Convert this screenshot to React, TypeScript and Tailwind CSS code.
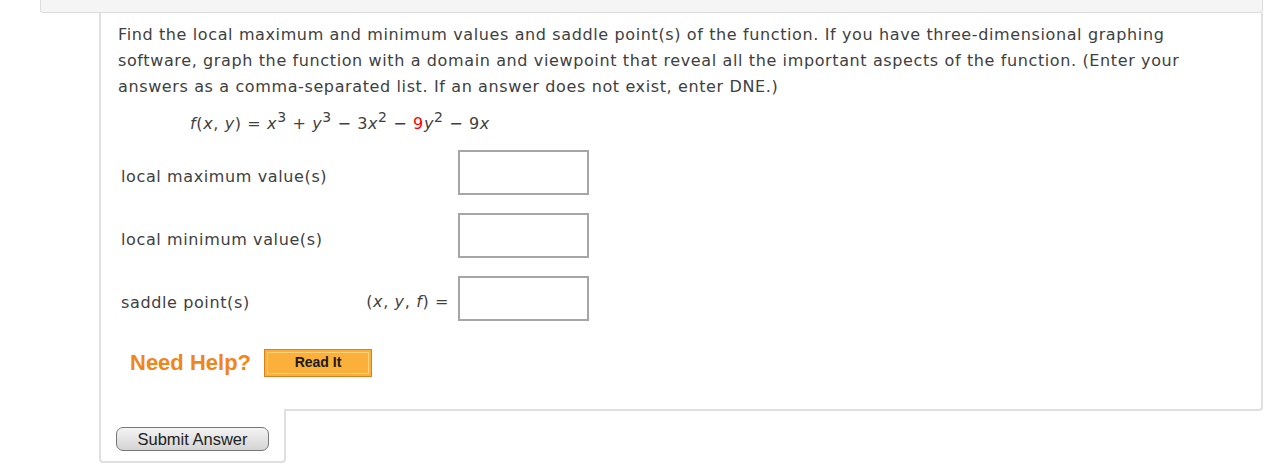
import React from 'react'

const verdana = { fontFamily: '"DejaVu Sans", Verdana, sans-serif' }

function AnswerRow({ label, prefix }: { label: string; prefix?: React.ReactNode }) {
  return (
    <div className="flex items-center h-[45px]">
      <div className="w-[243px] pl-[3px] mt-[8px]">{label}</div>
      <div className="w-[97px] text-right pr-[9px] mt-[7px]">{prefix}</div>
      <input
        type="text"
        className="w-[131px] h-[45px] border-2 border-[#a6a6a6] bg-white outline-none"
      />
    </div>
  )
}

export default function App() {
  return (
    <div className="bg-white w-[1284px] h-[471px] text-[#404040] text-[16px] tracking-[0.62px]" style={verdana}>
      {/* top strip */}
      <div className="ml-[40px] w-[1223px] h-[13px] bg-[#f5f5f5] border border-t-0 border-[#dcdcdc] rounded-b-[3px]" />

      {/* question panel */}
      <div className="ml-[99px] w-[1164px] h-[398px] border-l-2 border-r-2 border-b-2 border-[#e0e0e0] rounded-br-[4px] pt-[9px] pl-[17px] pr-[20px]">
        <p className="leading-[26px] w-[1080px]">
          Find the local maximum and minimum values and saddle point(s) of the function. If you have three-dimensional graphing
          software, graph the function with a domain and viewpoint that reveal all the important aspects of the function. (Enter your
          answers as a comma-separated list. If an answer does not exist, enter DNE.)
        </p>

        <div className="mt-[11px] ml-[72px] h-[26px] leading-[26px]">
          <i>f</i>(<i>x</i>, <i>y</i>) = <i>x</i>
          <sup className="text-[14px]">3</sup> + <i>y</i>
          <sup className="text-[14px]">3</sup> − 3<i>x</i>
          <sup className="text-[14px]">2</sup> − <span className="text-[#ff0000]">9</span>
          <i>y</i>
          <sup className="text-[14px]">2</sup> − 9<i>x</i>
        </div>

        <div className="mt-[13px] flex flex-col gap-[18px]">
          <AnswerRow label="local maximum value(s)" />
          <AnswerRow label="local minimum value(s)" />
          <AnswerRow
            label="saddle point(s)"
            prefix={
              <span>
                (<i>x</i>, <i>y</i>, <i>f</i>) =
              </span>
            }
          />
        </div>

        <div className="mt-[25px] ml-[12px] flex items-center gap-[13px] tracking-normal" style={{ fontFamily: '"Liberation Sans", Arial, sans-serif' }}>
          <span className="text-[22px] font-bold text-[#f08519]">Need Help?</span>
          <button className="w-[108px] h-[28px] border border-[#d9801f] bg-[#fbb03b] p-[2px]">
            <span className="flex items-center justify-center h-full border border-[#ffd27a] text-[14px] font-bold text-[#1a1a1a]">
              Read It
            </span>
          </button>
        </div>
      </div>

      {/* submit tab */}
      <div className="ml-[99px] -mt-[2px] w-[187px] h-[54px] bg-white border-l-2 border-r-2 border-b-2 border-[#e0e0e0] rounded-b-[4px] pt-[18px] pl-[15px]">
        <button
          className="w-[153px] h-[24px] rounded-[7px] border border-[#777] bg-gradient-to-b from-[#f4f4f4] to-[#d4d4d4] text-[16.5px] text-[#222] leading-none tracking-normal"
          style={{ fontFamily: '"Liberation Sans", Arial, sans-serif' }}
        >
          Submit Answer
        </button>
      </div>
    </div>
  )
}
